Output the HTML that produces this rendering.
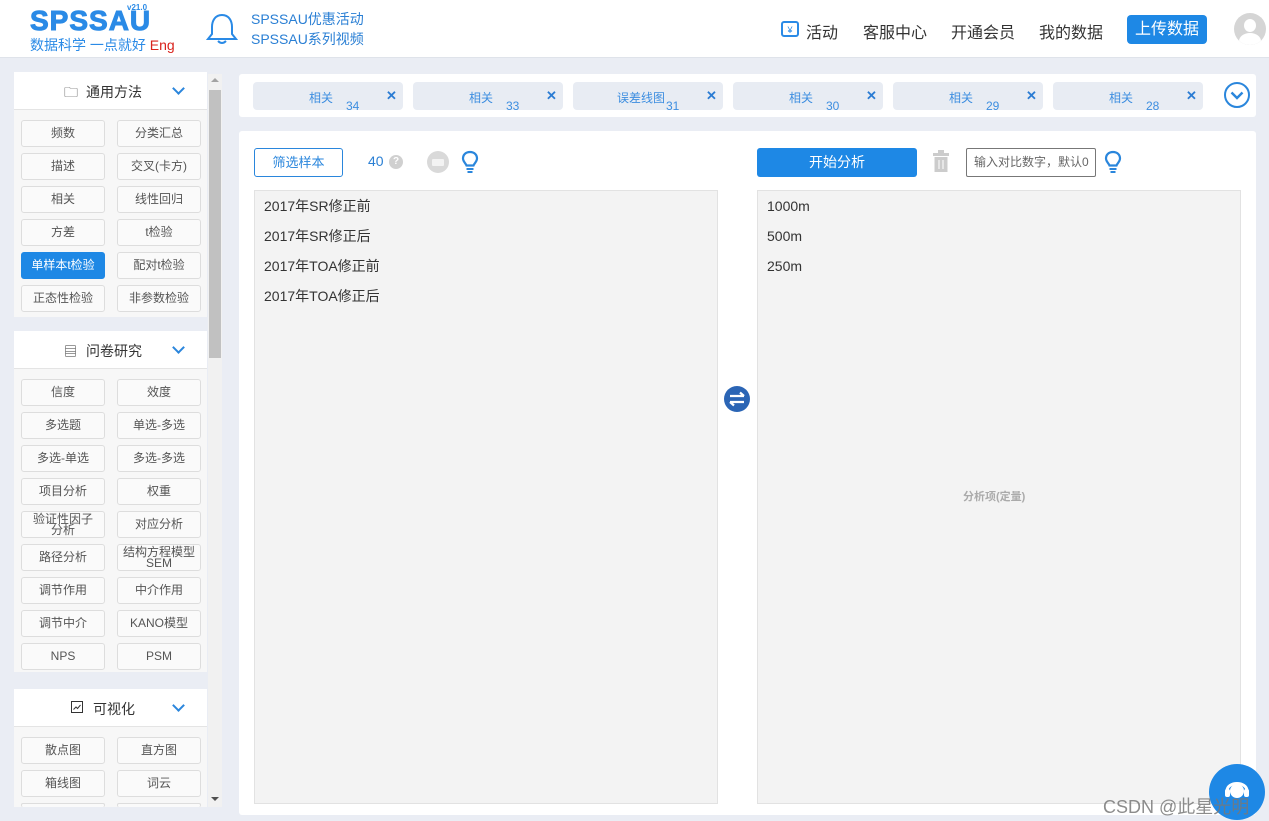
<!DOCTYPE html>
<html><head><meta charset="utf-8">
<style>
*{box-sizing:border-box;margin:0;padding:0}
body{width:1269px;height:821px;overflow:hidden;background:#eaedf4;font-family:"Liberation Sans","Noto Sans CJK SC",sans-serif;position:relative;color:#333}
.a{position:absolute}
.hdr{left:0;top:0;width:1269px;height:58px;background:#fff;border-bottom:1px solid #dfe3ea}
.nav{top:19px;font-size:16px;color:#333}
.sec{left:14px;width:193px;background:#fff}
.sh{height:38px;border-bottom:1px solid #e4e4e4;font-size:14px;color:#333}
.btn{position:absolute;width:84px;height:27px;border:1px solid #ddd;border-radius:3px;background:#fafafa;font-size:12px;color:#555;text-align:center;line-height:25px}
.btn.two{line-height:11px;padding-top:2px}
.btn.on{background:#1e88e5;border-color:#1e88e5;color:#fff}
.tab{top:82px;width:150px;height:28px;background:#e8ecf3;border-radius:4px;font-size:12px;color:#3d8ee0}
.tab .t{position:absolute;left:56px;top:7px}
.tab .n{position:absolute;left:93px;top:17px;font-size:12px}
.tab .x{position:absolute;left:133px;top:6px;font-size:13px;font-weight:bold;color:#2b7cd3}
.list{background:#f3f3f3;border:1px solid #e2e2e2}
.item{font-size:14px;color:#333;height:30px;line-height:30px;padding-left:9px}
.chev{position:absolute;right:24px;top:12px;width:9px;height:9px;border-right:2px solid #2b86dc;border-bottom:2px solid #2b86dc;transform:rotate(45deg) }
</style></head><body>
<div class="a hdr"></div>
<div class="a" style="left:30px;top:5px;font-size:28px;font-weight:bold;color:#2a8ae6;letter-spacing:1px;font-family:'Liberation Sans',sans-serif;-webkit-text-stroke:1px #2a8ae6">SPSSAU</div>
<div class="a" style="left:127px;top:3px;font-size:8px;font-weight:bold;color:#2a8ae6">v21.0</div>
<div class="a" style="left:30px;top:35px;font-size:14px;color:#2a8ae6">数据科学 一点就好 <span style="color:#d9221c">Eng</span></div>
<svg class="a" style="left:206px;top:12px" width="32" height="34" viewBox="0 0 32 34"><path d="M16 3 C9 3 6 9 6 15 L6 22 L2 27 L30 27 L26 22 L26 15 C26 9 23 3 16 3Z M12 29 Q16 33 20 29" fill="none" stroke="#2a8ae6" stroke-width="2"/></svg>
<div class="a" style="left:251px;top:9px;font-size:14px;color:#2a7fd4;line-height:20px">SPSSAU优惠活动<br>SPSSAU系列视频</div>
<svg class="a" style="left:781px;top:21px" width="18" height="16" viewBox="0 0 18 16"><rect x="1" y="1" width="16" height="14" rx="2" fill="none" stroke="#2a8ae6" stroke-width="2"/><text x="9" y="12" font-size="9" fill="#2a8ae6" text-anchor="middle">¥</text></svg>
<div class="a nav" style="left:806px">活动</div>
<div class="a nav" style="left:863px">客服中心</div>
<div class="a nav" style="left:951px">开通会员</div>
<div class="a nav" style="left:1039px">我的数据</div>
<div class="a" style="left:1127px;top:15px;width:80px;height:29px;background:#1e88e5;border-radius:4px;color:#fff;font-size:16px;text-align:center;line-height:29px">上传数据</div>
<div class="a" style="left:1234px;top:13px;width:32px;height:32px;border-radius:50%;background:#d5d5d5;overflow:hidden"><div class="a" style="left:10px;top:6px;width:12px;height:13px;border-radius:50%;background:#fff"></div><div class="a" style="left:5px;top:20px;width:22px;height:16px;border-radius:50%;background:#fff"></div></div>

<div class="a" style="left:208px;top:74px;width:14px;height:733px;background:#f1f1f1"></div>
<div class="a" style="left:209px;top:90px;width:12px;height:268px;background:#c1c1c1"></div>
<div class="a" style="left:211px;top:78px;border:4px solid transparent;border-bottom-color:#a3a3a3;border-top:0"></div>
<div class="a" style="left:211px;top:797px;border:4px solid transparent;border-top-color:#505050;border-bottom:0"></div>

<div class="a sec" style="top:72px;height:245px;background:#f7f7f7">
 <div class="sh" style="background:#fff;position:relative"><span class="a" style="left:50px;top:10px">🗀</span><span class="a" style="left:72px;top:10px">通用方法</span><i class="chev"></i></div>
</div>
<div class="a sec" style="top:331px;height:341px;background:#f7f7f7">
 <div class="sh" style="background:#fff;position:relative"><span class="a" style="left:50px;top:10px;font-size:13px">▤</span><span class="a" style="left:72px;top:10px">问卷研究</span><i class="chev"></i></div>
</div>
<div class="a sec" style="top:689px;height:118px;background:#f7f7f7;overflow:hidden">
 <div class="sh" style="background:#fff;position:relative"><svg class="a" style="left:57px;top:12px" width="12" height="12" viewBox="0 0 12 12"><rect x="0.5" y="0.5" width="11" height="11" fill="none" stroke="#333"/><path d="M2.5 8.5 L5 6 L6.5 7.5 L9.5 4" fill="none" stroke="#333"/></svg><span class="a" style="left:79px;top:10px">可视化</span><i class="chev"></i></div>
</div>

<div class="btn" style="left:21px;top:120px">频数</div><div class="btn" style="left:117px;top:120px">分类汇总</div>
<div class="btn" style="left:21px;top:153px">描述</div><div class="btn" style="left:117px;top:153px">交叉(卡方)</div>
<div class="btn" style="left:21px;top:186px">相关</div><div class="btn" style="left:117px;top:186px">线性回归</div>
<div class="btn" style="left:21px;top:219px">方差</div><div class="btn" style="left:117px;top:219px">t检验</div>
<div class="btn on" style="left:21px;top:252px">单样本t检验</div><div class="btn" style="left:117px;top:252px">配对t检验</div>
<div class="btn" style="left:21px;top:285px">正态性检验</div><div class="btn" style="left:117px;top:285px">非参数检验</div>

<div class="btn" style="left:21px;top:379px">信度</div><div class="btn" style="left:117px;top:379px">效度</div>
<div class="btn" style="left:21px;top:412px">多选题</div><div class="btn" style="left:117px;top:412px">单选-多选</div>
<div class="btn" style="left:21px;top:445px">多选-单选</div><div class="btn" style="left:117px;top:445px">多选-多选</div>
<div class="btn" style="left:21px;top:478px">项目分析</div><div class="btn" style="left:117px;top:478px">权重</div>
<div class="btn two" style="left:21px;top:511px">验证性因子<br>分析</div><div class="btn" style="left:117px;top:511px">对应分析</div>
<div class="btn" style="left:21px;top:544px">路径分析</div><div class="btn two" style="left:117px;top:544px">结构方程模型<br>SEM</div>
<div class="btn" style="left:21px;top:577px">调节作用</div><div class="btn" style="left:117px;top:577px">中介作用</div>
<div class="btn" style="left:21px;top:610px">调节中介</div><div class="btn" style="left:117px;top:610px">KANO模型</div>
<div class="btn" style="left:21px;top:643px">NPS</div><div class="btn" style="left:117px;top:643px">PSM</div>

<div class="btn" style="left:21px;top:737px">散点图</div><div class="btn" style="left:117px;top:737px">直方图</div>
<div class="btn" style="left:21px;top:770px">箱线图</div><div class="btn" style="left:117px;top:770px">词云</div>
<div class="btn" style="left:21px;top:803px;height:4px;border-bottom:0"></div><div class="btn" style="left:117px;top:803px;height:4px;border-bottom:0"></div>

<div class="a" style="left:239px;top:74px;width:1017px;height:43px;background:#fff;border-radius:3px"></div>
<div class="a tab" style="left:253px"><span class="t">相关</span><span class="n">34</span><span class="x">✕</span></div>
<div class="a tab" style="left:413px"><span class="t">相关</span><span class="n">33</span><span class="x">✕</span></div>
<div class="a tab" style="left:573px"><span class="t" style="left:44px">误差线图</span><span class="n">31</span><span class="x">✕</span></div>
<div class="a tab" style="left:733px"><span class="t">相关</span><span class="n">30</span><span class="x">✕</span></div>
<div class="a tab" style="left:893px"><span class="t">相关</span><span class="n">29</span><span class="x">✕</span></div>
<div class="a tab" style="left:1053px"><span class="t">相关</span><span class="n">28</span><span class="x">✕</span></div>
<svg class="a" style="left:1223px;top:81px" width="28" height="28" viewBox="0 0 28 28"><circle cx="14" cy="14" r="12" fill="none" stroke="#2a86dc" stroke-width="2"/><path d="M8.5 11.5 L14 17 L19.5 11.5" fill="none" stroke="#2a86dc" stroke-width="2.4"/></svg>

<div class="a" style="left:239px;top:131px;width:1017px;height:684px;background:#fff;border-radius:3px"></div>
<div class="a" style="left:254px;top:148px;width:89px;height:29px;border:1px solid #2a86dc;border-radius:3px;color:#2a86dc;font-size:13px;text-align:center;line-height:27px">筛选样本</div>
<div class="a" style="left:368px;top:153px;font-size:14px;color:#2a7fd4">40</div>
<div class="a" style="left:389px;top:155px;width:14px;height:14px;border-radius:50%;background:#d0d0d0;color:#fff;font-size:10px;text-align:center;line-height:14px;font-weight:bold">?</div>
<div class="a" style="left:427px;top:151px;width:22px;height:22px;border-radius:50%;background:#d9d9d9"><div class="a" style="left:5px;top:8px;width:12px;height:7px;background:#f3f3f3;border-radius:1px"></div></div>
<svg class="a" style="left:461px;top:150px" width="18" height="24" viewBox="0 0 18 24"><path d="M9 2 C4.5 2 2 5 2 8.5 C2 11.5 4.5 13 5.5 15.5 L12.5 15.5 C13.5 13 16 11.5 16 8.5 C16 5 13.5 2 9 2Z" fill="none" stroke="#2a86dc" stroke-width="2.2"/><path d="M5.5 19 L12.5 19 M6.5 22 L11.5 22" stroke="#2a86dc" stroke-width="2"/></svg>

<div class="a list" style="left:254px;top:190px;width:464px;height:614px">
 <div class="item">2017年SR修正前</div><div class="item">2017年SR修正后</div><div class="item">2017年TOA修正前</div><div class="item">2017年TOA修正后</div>
</div>
<svg class="a" style="left:723px;top:385px" width="28" height="28" viewBox="0 0 28 28"><circle cx="14" cy="14" r="13" fill="#2b65b5"/><path d="M7 11 L21 11 M17 7.5 L21 11 M21 17 L7 17 M11 20.5 L7 17" stroke="#fff" stroke-width="2.2" fill="none"/></svg>

<div class="a" style="left:757px;top:148px;width:160px;height:29px;background:#1e88e5;border-radius:3px;color:#fff;font-size:14px;text-align:center;line-height:29px">开始分析</div>
<svg class="a" style="left:932px;top:150px" width="18" height="22" viewBox="0 0 18 22"><rect x="1" y="3" width="16" height="3" fill="#ccc"/><rect x="6" y="0" width="6" height="3" fill="#ccc"/><rect x="2.5" y="7" width="13" height="15" fill="#ccc"/><path d="M7 10 V19 M11 10 V19" stroke="#eee" stroke-width="1.5"/></svg>
<div class="a" style="left:966px;top:148px;width:130px;height:29px;border:1px solid #777;border-radius:2px;font-size:12px;color:#666;line-height:27px;padding-left:7px;white-space:nowrap;overflow:hidden">输入对比数字，默认0</div>
<svg class="a" style="left:1104px;top:150px" width="18" height="24" viewBox="0 0 18 24"><path d="M9 2 C4.5 2 2 5 2 8.5 C2 11.5 4.5 13 5.5 15.5 L12.5 15.5 C13.5 13 16 11.5 16 8.5 C16 5 13.5 2 9 2Z" fill="none" stroke="#2a86dc" stroke-width="2.2"/><path d="M5.5 19 L12.5 19 M6.5 22 L11.5 22" stroke="#2a86dc" stroke-width="2"/></svg>

<div class="a list" style="left:757px;top:190px;width:484px;height:614px">
 <div class="item">1000m</div><div class="item">500m</div><div class="item">250m</div>
 <div class="a" style="left:205px;top:297px;font-size:11px;color:#aaa;font-weight:bold">分析项(定量)</div>
</div>

<div class="a" style="left:1209px;top:764px;width:56px;height:56px;border-radius:50%;background:#1e88e5"></div>
<svg class="a" style="left:1221px;top:773px" width="32" height="32" viewBox="0 0 32 32"><path d="M6 18 C6 8 26 8 26 18" fill="none" stroke="#fff" stroke-width="3"/><circle cx="16" cy="18" r="7" fill="#fff"/><rect x="4" y="16" width="5" height="8" rx="2" fill="#fff"/><rect x="23" y="16" width="5" height="8" rx="2" fill="#fff"/></svg>
<div class="a" style="left:1103px;top:793px;font-size:18px;color:rgba(120,120,120,0.85);white-space:nowrap">CSDN @此星光明</div>
</body></html>
